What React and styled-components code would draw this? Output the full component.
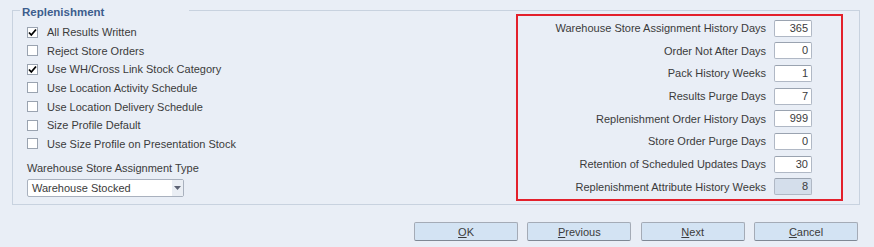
import React from "react";
import styled, { createGlobalStyle } from "styled-components";

const Global = createGlobalStyle`
  html, body { margin: 0; padding: 0; background: #e9eef6; }
  body { font-family: "Liberation Sans", Arial, sans-serif; font-size: 11px; color: #3b3b3b; }
`;

const Page = styled.div`
  width: 874px;
  height: 247px;
  box-sizing: border-box;
  padding: 10px 14px 0 12px;
`;

const Frame = styled.div`
  position: relative;
  box-sizing: border-box;
  height: 195px;
  border: 1px solid #c8d2df;
  display: flex;
  justify-content: space-between;
  align-items: flex-start;
  padding: 2px 16px 0 14px;
`;

const Legend = styled.div`
  position: absolute;
  left: 7px;
  top: -6px;
  width: 167px;
  padding-left: 2px;
  background: #e9eef6;
  color: #3d5d8d;
  font-weight: bold;
  font-size: 11.5px;
  line-height: 14px;
`;

const LeftCol = styled.div`
  display: flex;
  flex-direction: column;
  padding-top: 9.7px;
`;

const CheckRow = styled.label`
  display: flex;
  align-items: center;
  height: 18.67px;
  gap: 9px;
`;

const Box = styled.span`
  box-sizing: border-box;
  width: 11px;
  height: 11px;
  border: 1px solid #9aa3b0;
  background: #fff;
  display: inline-flex;
  align-items: center;
  justify-content: center;
`;

const TypeLabel = styled.div`
  margin-top: 7px;
  line-height: 16px;
`;

const Select = styled.div`
  margin-top: 3px;
  width: 157px;
  height: 18px;
  box-sizing: border-box;
  border: 1px solid #a9b1be;
  border-radius: 2px;
  background: #fff;
  display: flex;
  align-items: stretch;
`;

const SelectText = styled.span`
  flex: 1;
  padding-left: 4px;
  line-height: 16px;
`;

const Arrow = styled.span`
  width: 11px;
  background: #eaeef4;
  display: flex;
  align-items: center;
  justify-content: center;
`;

const Panel = styled.div`
  box-sizing: border-box;
  width: 327px;
  height: 187px;
  margin-top: 1px;
  border: 2px solid #e3202b;
  padding: 0.7px 29px 0 0;
  display: flex;
  flex-direction: column;
`;

const FieldRow = styled.div`
  display: flex;
  align-items: center;
  justify-content: flex-end;
  gap: 8px;
  height: 22.7px;
`;

const NumInput = styled.div`
  box-sizing: border-box;
  width: 38px;
  height: 17px;
  border: 1px solid #b0b8c5;
  border-top-color: #9aa3b0;
  border-radius: 2px;
  background: ${(p) => (p.$disabled ? "#d4deeb" : "#fff")};
  text-align: right;
  padding-right: 3px;
  line-height: 15px;
`;

const Buttons = styled.div`
  display: flex;
  justify-content: flex-end;
  gap: 9.33px;
  margin-top: 17px;
  margin-right: 2px;
`;

const Button = styled.button`
  width: 104px;
  height: 19px;
  box-sizing: border-box;
  padding: 0;
  border: 1px solid #a4abb6;
  border-bottom-color: #7f8895;
  border-radius: 2px;
  background: #d3e3f3;
  font-family: inherit;
  font-size: 11px;
  color: #3b3b3b;
`;

const checks = [
  ["All Results Written", true],
  ["Reject Store Orders", false],
  ["Use WH/Cross Link Stock Category", true],
  ["Use Location Activity Schedule", false],
  ["Use Location Delivery Schedule", false],
  ["Size Profile Default", false],
  ["Use Size Profile on Presentation Stock", false],
];

const fields = [
  ["Warehouse Store Assignment History Days", "365"],
  ["Order Not After Days", "0"],
  ["Pack History Weeks", "1"],
  ["Results Purge Days", "7"],
  ["Replenishment Order History Days", "999"],
  ["Store Order Purge Days", "0"],
  ["Retention of Scheduled Updates Days", "30"],
  ["Replenishment Attribute History Weeks", "8", true],
];

const Check = () => (
  <svg width="9" height="9" viewBox="0 0 9 9">
    <path d="M1 4.5 L3.3 7 L8 1.5" stroke="#000" strokeWidth="1.8" fill="none" />
  </svg>
);

export default function App() {
  return (
    <Page>
      <Global />
      <Frame>
        <Legend>Replenishment</Legend>
        <LeftCol>
          {checks.map(([t, c]) => (
            <CheckRow key={t}>
              <Box>{c && <Check />}</Box>
              <span>{t}</span>
            </CheckRow>
          ))}
          <TypeLabel>Warehouse Store Assignment Type</TypeLabel>
          <Select>
            <SelectText>Warehouse Stocked</SelectText>
            <Arrow>
              <svg width="7" height="4" viewBox="0 0 7 4">
                <path d="M0 0 H7 L3.5 4 Z" fill="#5d6374" />
              </svg>
            </Arrow>
          </Select>
        </LeftCol>
        <Panel>
          {fields.map(([t, v, d]) => (
            <FieldRow key={t}>
              <span>{t}</span>
              <NumInput $disabled={d}>{v}</NumInput>
            </FieldRow>
          ))}
        </Panel>
      </Frame>
      <Buttons>
        <Button><u>O</u>K</Button>
        <Button><u>P</u>revious</Button>
        <Button><u>N</u>ext</Button>
        <Button><u>C</u>ancel</Button>
      </Buttons>
    </Page>
  );
}
